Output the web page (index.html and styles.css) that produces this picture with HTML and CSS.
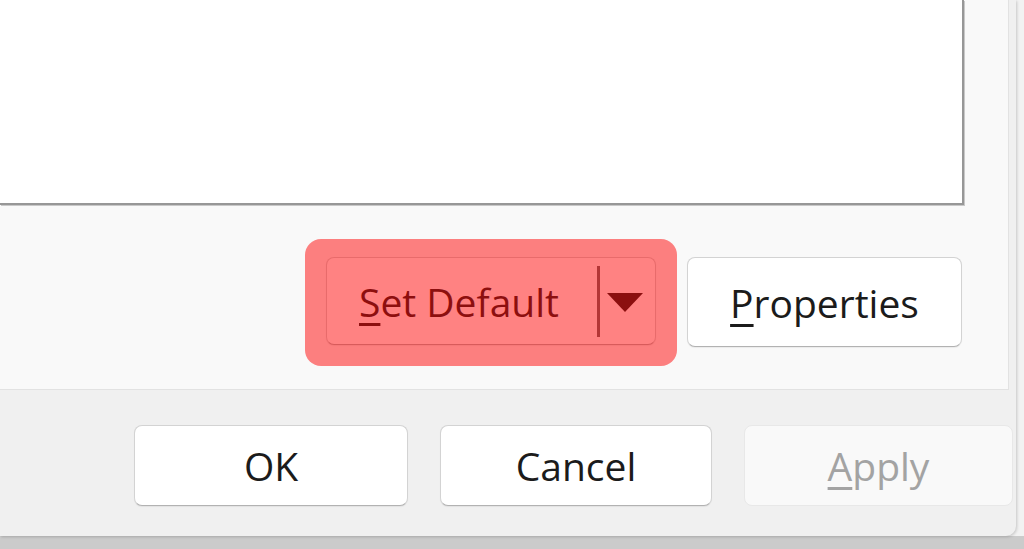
FILE: index.html
```html
<!DOCTYPE html>
<html lang="en">
<head>
<meta charset="utf-8">
<title>Sound dialog buttons</title>
<link rel="stylesheet" href="styles.css">
</head>
<body>
<div class="screen">
  <div class="dialog">
    <div class="panel">
      <div class="listbox"></div>
      <div class="panel-actions">
        <div class="highlight-wrap">
          <button class="btn split" type="button">
            <span class="split-label"><u>S</u>et Default</span>
            <span class="split-divider"></span>
            <svg class="split-arrow" viewBox="0 0 36 19" width="36" height="19" aria-hidden="true"><polygon points="0,0 36,0 18,19" fill="#1e1e1e"/></svg>
          </button>
        </div>
        <button class="btn props" type="button"><u>P</u>roperties</button>
      </div>
    </div>
    <div class="dialog-actions">
      <button class="btn footer ok" type="button">OK</button>
      <button class="btn footer cancel" type="button">Cancel</button>
      <button class="btn footer apply" type="button" disabled><u>A</u>pply</button>
    </div>
  </div>
  <div class="strip"></div>
</div>
</body>
</html>
```

FILE: styles.css
```css
* { box-sizing: border-box; }

html, body {
  margin: 0;
  padding: 0;
  width: 1024px;
  height: 549px;
  overflow: hidden;
  background: #f2f2f2;
  font-family: "Open Sans", "Noto Sans", sans-serif;
}

.screen {
  display: flex;
  flex-direction: column;
  width: 1024px;
  height: 549px;
}

.dialog {
  width: 1016px;
  height: 536px;
  background: #f0f0f0;
  border-radius: 0 0 10px 0;
  box-shadow: 1px 1px 3px rgba(0, 0, 0, 0.18);
  display: flex;
  flex-direction: column;
  position: relative;
  z-index: 1;
}

.strip {
  flex: 1;
  background: #cbcbcb;
}

.panel {
  width: 1009px;
  height: 390px;
  background: #f9f9f9;
  border-right: 1px solid #e2e2e2;
  border-bottom: 1px solid #e2e2e2;
  display: flex;
  flex-direction: column;
}

.listbox {
  width: 964px;
  height: 205px;
  background: #ffffff;
  border-right: 2px solid #979797;
  border-bottom: 2px solid #979797;
  box-shadow: 1px 1px 0 #c8c8c8;
}

.panel-actions {
  display: flex;
  justify-content: flex-end;
  align-items: flex-start;
  gap: 31px;
  padding-top: 52px;
  padding-right: 46px;
}

.btn {
  font-family: inherit;
  font-size: 39px;
  line-height: 1;
  color: #1b1b1b;
  background: #ffffff;
  border: 1px solid #d3d3d3;
  border-bottom-color: #b2b2b2;
  border-radius: 8px;
  box-shadow: 0 1px 1px rgba(0, 0, 0, 0.06);
  padding: 0;
  display: flex;
  align-items: center;
  justify-content: center;
}

.btn u {
  text-decoration-thickness: 3px;
  text-underline-offset: 6px;
}

.highlight-wrap {
  position: relative;
}

.highlight-wrap::after {
  content: "";
  position: absolute;
  top: -18px;
  bottom: -21px;
  left: -21px;
  right: -21px;
  border-radius: 16px;
  background: rgba(255, 0, 0, 0.49);
  pointer-events: none;
}

.split {
  width: 330px;
  height: 88px;
  justify-content: flex-start;
  padding-left: 32px;
  color: #1e1e1e;
}

.split-divider {
  width: 3px;
  height: 71px;
  background: #6a6a6a;
  margin-left: 38px;
}

.split-arrow {
  margin-left: 7px;
  margin-top: 2px;
}

.props {
  width: 275px;
  height: 90px;
}

.dialog-actions {
  display: flex;
  justify-content: flex-end;
  gap: 32px;
  padding-top: 35px;
  padding-right: 3px;
}

.footer {
  height: 81px;
}

.ok { width: 274px; }
.cancel { width: 272px; }

.apply {
  width: 269px;
  background: #f9f9f9;
  color: #a3a3a3;
  border-color: #e8e8e8;
  box-shadow: none;
}
```
